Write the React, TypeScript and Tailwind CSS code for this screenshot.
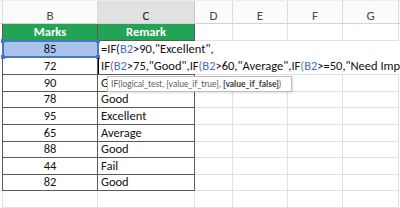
import React from "react";

const FONT = "font-['Carlito','Lato',sans-serif]";

type RowDef = { h: string; b: string; c: string; table: boolean; header?: boolean };

const rows: RowDef[] = [
  { h: "h-[17px]", b: "Marks", c: "Remark", table: true, header: true },
  { h: "h-[17px]", b: "85", c: "", table: true },
  { h: "h-[17px]", b: "72", c: "", table: true },
  { h: "h-[17px]", b: "90", c: "Good", table: true },
  { h: "h-[16px]", b: "78", c: "Good", table: true },
  { h: "h-[17px]", b: "95", c: "Excellent", table: true },
  { h: "h-[17px]", b: "65", c: "Average", table: true },
  { h: "h-[16px]", b: "88", c: "Good", table: true },
  { h: "h-[17px]", b: "44", c: "Fail", table: true },
  { h: "h-[16px]", b: "82", c: "Good", table: true },
  { h: "h-[17px]", b: "", c: "", table: false },
];

export default function App() {
  return (
    <div className={`relative w-[400px] h-[208px] overflow-hidden bg-white text-[#111] ${FONT}`}>
      {/* column header row */}
      <div className="flex h-[24px] border-b border-[#d4d4d4] border-t border-t-[#ececec] bg-[#fbfbfb] text-[13px] text-[#4a4a4a]">
        <div className="w-[3px] shrink-0 border-r border-[#dadada]" />
        <div className="w-[95px] shrink-0 border-r border-[#dadada] flex justify-center pt-[8px] leading-[14px]">B</div>
        <div className="w-[97px] shrink-0 border-r border-[#c8c8c8] bg-[#e1e1e1] text-[#262626] flex justify-center pt-[8px] leading-[14px]">C</div>
        <div className="w-[38px] shrink-0 border-r border-[#dadada] flex justify-center pt-[8px] leading-[14px]">D</div>
        <div className="w-[55px] shrink-0 border-r border-[#dadada] flex justify-center pt-[8px] leading-[14px]">E</div>
        <div className="w-[55px] shrink-0 border-r border-[#dadada] flex justify-center pt-[8px] leading-[14px]">F</div>
        <div className="w-[56px] shrink-0 border-r border-[#dadada] flex justify-center pt-[8px] leading-[14px]">G</div>
      </div>

      {rows.map((r, i) => {
        const dark = r.table ? "border-[#5a5a5a]" : "border-[#e1e1e1]";
        const bBg = r.header ? "bg-[#23a455] text-white font-bold" : i === 1 ? "bg-[#a9c3ea]" : "";
        const cBg = r.header ? "bg-[#23a455] text-white font-bold justify-center" : "justify-start pl-[3px]";
        return (
          <div key={i} className={`flex ${r.h} text-[12.5px] leading-none`}>
            <div className={`w-[3px] shrink-0 border-r ${dark}`} />
            <div className={`w-[95px] shrink-0 border-r border-b ${dark} ${bBg} flex items-center justify-center`}>{r.b}</div>
            <div className={`w-[97px] shrink-0 border-r border-b ${dark} ${cBg} flex items-center whitespace-nowrap`}>{r.c}</div>
            <div className="w-[38px] shrink-0 border-r border-b border-[#e1e1e1]" />
            <div className="w-[55px] shrink-0 border-r border-b border-[#e1e1e1]" />
            <div className="w-[55px] shrink-0 border-r border-b border-[#e1e1e1]" />
            <div className="w-[56px] shrink-0 border-r border-b border-[#e1e1e1]" />
          </div>
        );
      })}

      {/* reference highlight on B2 */}
      <div className="absolute left-[2px] top-[40px] w-[97px] h-[18px] border-2 border-[#4a76c6]" />
      <div className="absolute left-[1px] top-[39px] w-[4px] h-[4px] bg-[#4a76c6]" />
      <div className="absolute left-[96px] top-[39px] w-[4px] h-[4px] bg-[#4a76c6]" />
      <div className="absolute left-[1px] top-[55px] w-[4px] h-[4px] bg-[#4a76c6]" />
      <div className="absolute left-[96px] top-[55px] w-[4px] h-[4px] bg-[#4a76c6]" />

      {/* in-cell edit box */}
      <div className="absolute left-[100px] top-[41px] w-[300px] h-[33px] bg-white text-[12.5px] leading-[16.5px] whitespace-nowrap pl-[1px] text-[#111]">
        <div>
          =IF(<span className="text-[#3f6fc4]">B2</span>&gt;90,"Excellent",
        </div>
        <div>
          IF<span className="text-[#d0425a]">(</span><span className="text-[#3f6fc4]">B2</span>&gt;75,"Good",IF
          <span className="text-[#8b5fb4]">(</span><span className="text-[#3f6fc4]">B2</span>&gt;60,"Average",IF
          <span className="text-[#35a36b]">(</span><span className="text-[#3f6fc4]">B2</span>&gt;=50,"Need Improvement"
        </div>
      </div>
      <div className="absolute left-[98px] top-[58px] w-[1px] h-[16px] bg-black" />

      {/* function tooltip */}
      <div className="absolute left-[107px] top-[76px] w-[185px] h-[16px] border border-[#bdbdbd] bg-white shadow-[1px_1px_2px_rgba(0,0,0,0.12)] pl-[3px] font-['Lato',sans-serif] text-[8.5px] leading-[14px] text-[#5a5a5a] whitespace-nowrap">
        IF(logical_test, [value_if_true], <span className="font-bold text-[#3a3a3a]">[value_if_false]</span>)
      </div>
    </div>
  );
}
